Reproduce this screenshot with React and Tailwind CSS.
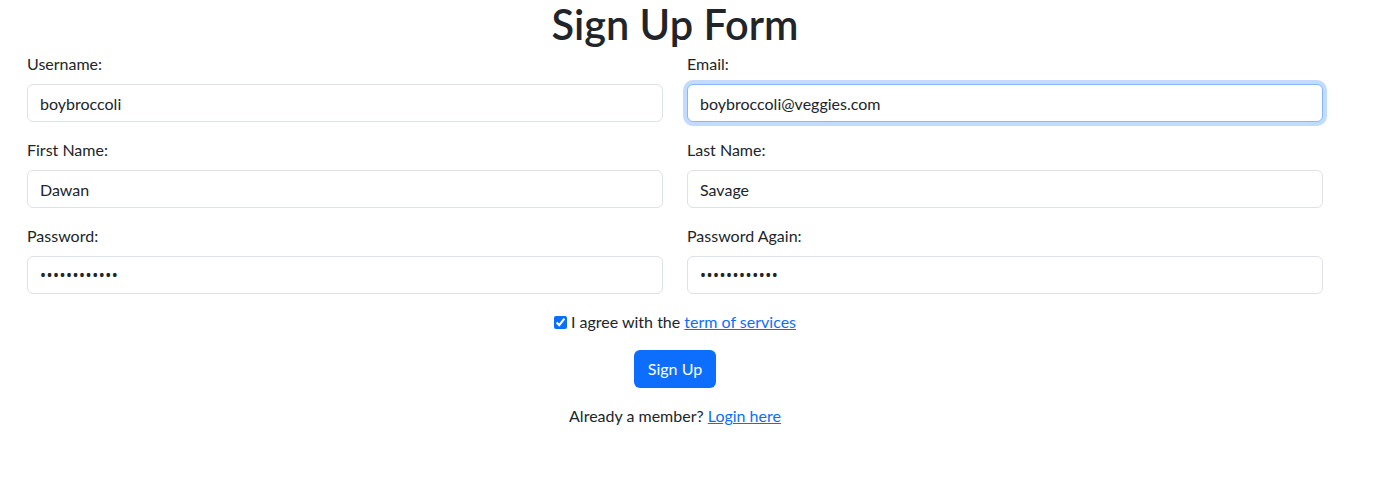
export default function App() {
  const font = { fontFamily: '"Lato", "Noto Sans", sans-serif' };
  const pwFont = { fontFamily: '"Noto Sans", "Lato", sans-serif', letterSpacing: "0.5px" };
  const inputCls =
    "block w-full h-[38px] px-3 text-[16px] text-[#212529] bg-white border border-[#dee2e6] rounded-[6px] outline-none";
  const Field = ({ label, value, type = "text", focus = false }) => (
    <div className="mb-[16px]">
      <div className="h-[24px] leading-[24px] mb-[8px] text-[16px] text-[#212529]">{label}</div>
      <input
        type={type}
        defaultValue={value}
        readOnly
        className={
          inputCls +
          (focus
            ? " !border-[#86b7fe] shadow-[0_0_0_4px_rgba(13,110,253,0.25)]"
            : "")
        }
        style={type === "password" ? pwFont : font}
      />
    </div>
  );
  return (
    <div className="w-[1376px] h-[492px] bg-white text-[#212529]" style={font}>
      <div className="w-[1320px] ml-[15px] px-[12px]">
        <h1 className="text-center text-[41.5px] leading-[48px] font-semibold mb-[4px]">Sign Up Form</h1>
        <div className="grid grid-cols-2 gap-x-[24px]">
          <Field label="Username:" value="boybroccoli" />
          <Field label="Email:" value="boybroccoli@veggies.com" focus />
          <Field label="First Name:" value="Dawan" />
          <Field label="Last Name:" value="Savage" />
          <Field label="Password:" value="password1234" type="password" />
          <Field label="Password Again:" value="password1234" type="password" />
        </div>
        <div className="flex items-center justify-center h-[24px] text-[16px]">
          <input type="checkbox" defaultChecked className="w-[13px] h-[13px] mr-[4px] accent-[#0d6efd]" />
          <span>I agree with the&nbsp;</span>
          <a href="#" className="text-[#0d6efd] underline">term of services</a>
        </div>
        <div className="flex justify-center mt-[16px]">
          <button className="h-[38px] px-[14px] bg-[#0d6efd] text-white text-[16px] rounded-[6px]" style={font}>
            Sign Up
          </button>
        </div>
        <div className="text-center mt-[16px] h-[24px] leading-[24px] text-[16px]">
          Already a member? <a href="#" className="text-[#0d6efd] underline">Login here</a>
        </div>
      </div>
    </div>
  );
}
